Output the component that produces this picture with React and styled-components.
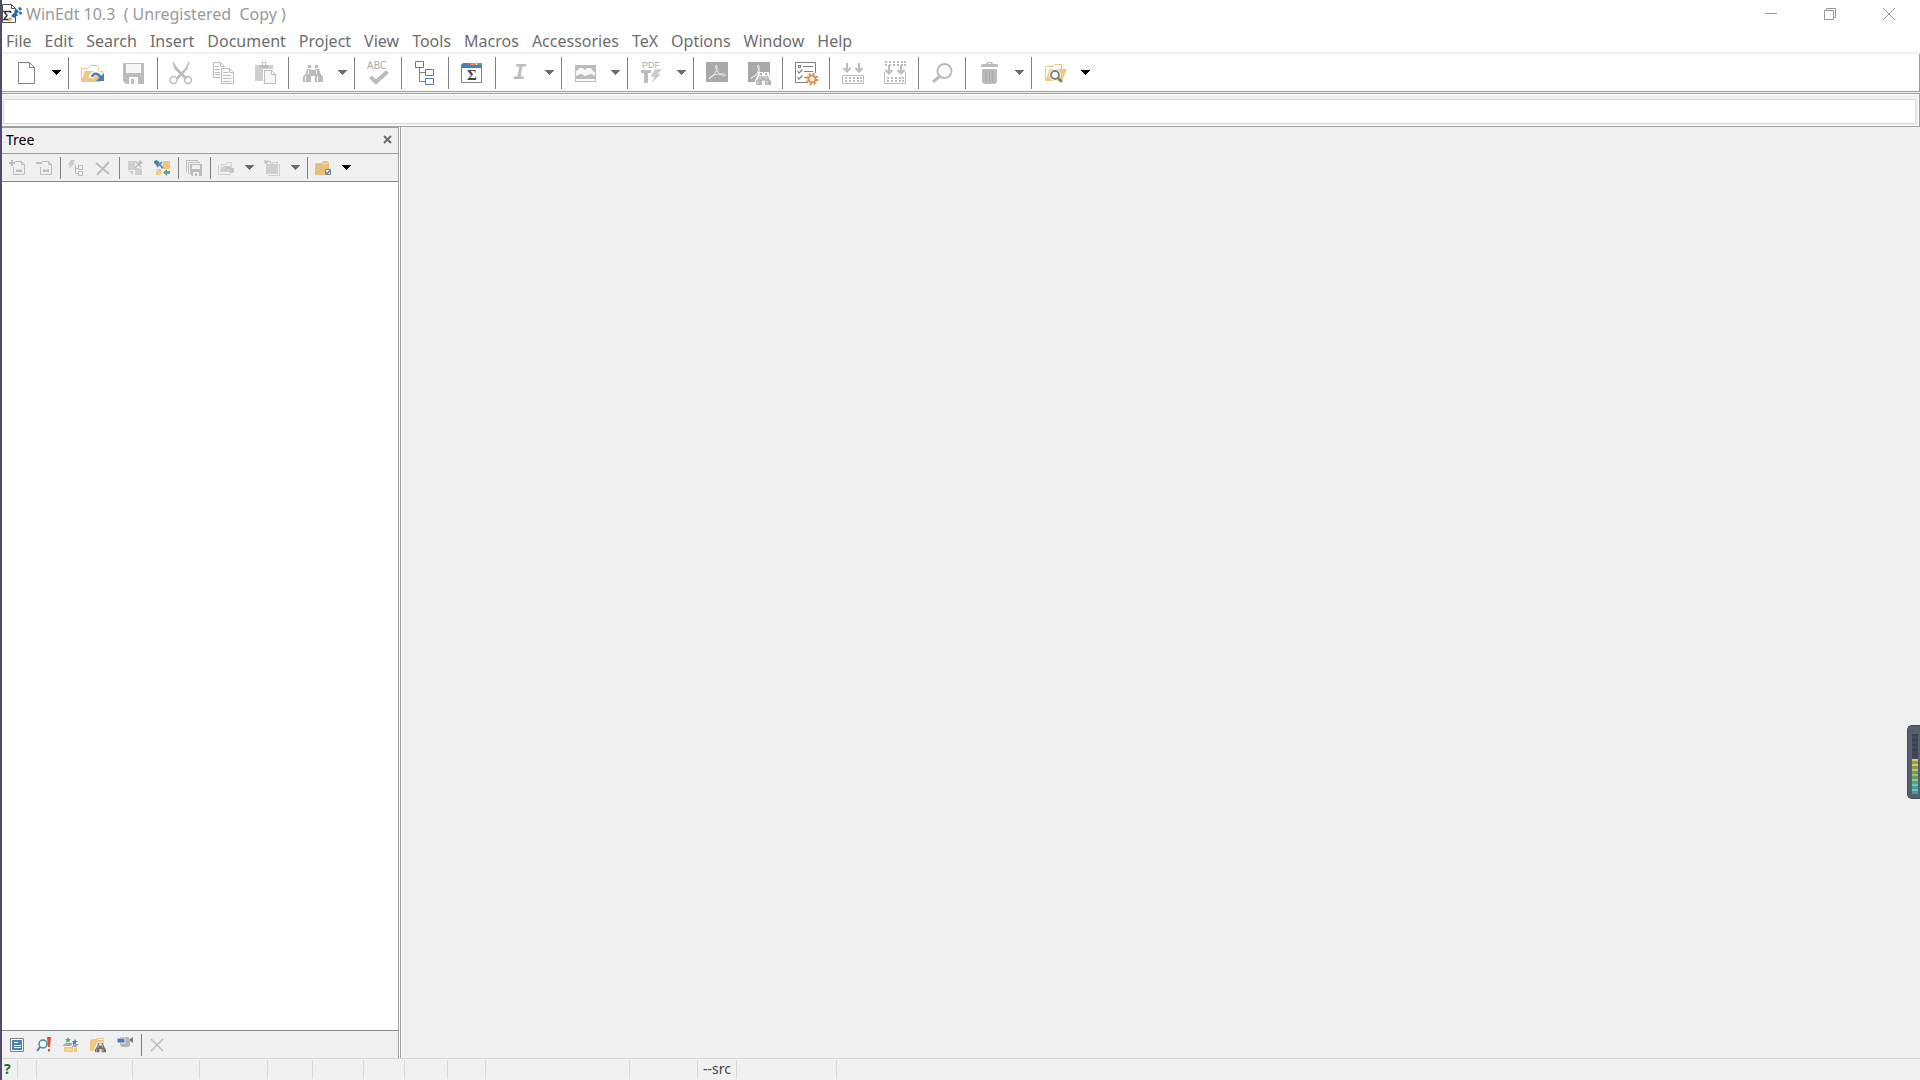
import React from 'react'
import styled, { createGlobalStyle, ThemeProvider } from 'styled-components'

const theme = {
    face: '#f0f0f0',
    line: '#a0a0a0',
    soft: '#d9d9d9',
    ink: '#6d6d6d',
}

const Global = createGlobalStyle`
*, *::before, *::after { box-sizing: border-box; }
body {
  margin: 0;
  background: #f0f0f0;
  font-family: "Noto Sans", "Open Sans", sans-serif;
}
button {
  padding: 0;
  border: 0;
  background: none;
  font: inherit;
  color: inherit;
}
svg { overflow: visible; }
`

const Frame = styled.div`
display: flex;
flex-direction: column;
height: 100vh;
overflow: hidden;
background: ${props => props.theme.face};
border-left: 2px solid #4f4c6b;
`

// title bar
const TitleBar = styled.header`
display: flex;
align-items: center;
height: 28px;
flex: none;
padding-right: 2px;
background: #fff;
color: #999;
`
const Title = styled.h1`
flex: 1;
margin: 0;
padding-left: 4px;
font-size: 16px;
font-weight: 400;
line-height: 28px;
white-space: pre;
`
const WindowButton = styled.button`
display: grid;
place-items: center;
width: 59px;
height: 28px;
`

// menu
const Menu = styled.nav`
display: flex;
flex: none;
height: 26px;
background: #fff;
border-bottom: 2px solid ${props => props.theme.face};
`
const MenuItem = styled.button`
padding: 0 6px 0 7px;
font-size: 16px;
line-height: 26px;
color: ${props => props.theme.ink};
&:first-child { padding-left: 4px; }
`

// toolbars
const MainBar = styled.div`
display: flex;
align-items: center;
flex: none;
height: 38px;
padding-left: 1px;
background: #fff;
border-right: 1px solid ${props => props.theme.line};
border-bottom: 1px solid ${props => props.theme.line};
`
const SmallBar = styled.div`
display: flex;
align-items: center;
flex: none;
height: 27px;
`
const Group = styled.div`
display: flex;
align-items: center;
height: ${props => (props.$small ? 22 : 32)}px;
padding: 0 2px;
border-right: 1px solid #808080;
&:last-child { border-right: 0; }
`
const Tool = styled.button`
display: grid;
align-items: center;
justify-items: start;
width: ${props => (props.$small ? 27 : 42)}px;
height: 100%;
padding-left: ${props => (props.$small ? 5 : 9)}px;
`
const Drop = styled.button`
display: grid;
place-items: center;
width: 19px;
height: 100%;
color: ${props => (props.$on ? '#000' : props.theme.ink)};
`

// command line strip
const Strip = styled.div`
display: flex;
flex: none;
height: 34px;
margin-top: 1px;
padding: 5px 3px 2px 0;
border: 1px solid ${props => props.theme.line};
border-left: 0;
box-shadow: inset 0 1px #fff, inset 0 -1px #fff, inset -1px 0 #fff;
`
const Command = styled.input`
flex: 1;
min-width: 0;
height: 25px;
margin-left: 1px;
padding: 0 4px;
border: 1px solid ${props => props.theme.soft};
outline: 0;
background: #fff;
font: 15px "Noto Sans", sans-serif;
`

const Body = styled.main`
display: flex;
flex: 1;
min-height: 0;
`
const Side = styled.aside`
display: flex;
flex-direction: column;
flex: none;
width: 397px;
margin-right: 3px;
border-top: 1px solid ${props => props.theme.line};
border-right: 1px solid ${props => props.theme.line};
box-shadow: 1px 0 #fff, 2px 0 ${props => props.theme.line}, 3px 0 #fff;
`
const SideHead = styled.div`
display: flex;
align-items: center;
justify-content: space-between;
flex: none;
height: 26px;
padding: 0 5px 2px 4px;
border-bottom: 1px solid ${props => props.theme.line};
`
const SideTitle = styled.h2`
margin: 0;
font-size: 14px;
font-weight: 400;
line-height: 22px;
color: #000;
`
const Close = styled.button`
display: grid;
place-items: center;
width: 12px;
height: 20px;
`
const TreeView = styled.div`
flex: 1;
min-height: 0;
background: #fff;
border-top: 1px solid #828790;
border-bottom: 1px solid #828790;
`
const Desk = styled.section`
flex: 1;
`

// status bar
const Status = styled.footer`
display: flex;
flex: none;
height: 22px;
padding: 1px 0;
border-top: 1px solid ${props => props.theme.soft};
`
const Cell = styled.div`
width: ${props => props.$w}px;
flex: none;
padding-left: ${props => (props.$w < 20 ? 2 : 5)}px;
border-right: 1px solid ${props => props.theme.soft};
font-size: 14px;
font-weight: ${props => (props.$bold ? 700 : 400)};
line-height: 18px;
color: ${props => (props.$bold ? '#0a7a2a' : '#444')};
white-space: nowrap;
`

// floating volume meter on the screen edge
const Meter = styled.div`
position: fixed;
right: 0;
top: 725px;
display: flex;
flex-direction: column;
align-items: flex-end;
width: 13px;
height: 74px;
padding: 8px 2px 0 0;
border: 1px solid #454c5a;
border-right: 0;
border-radius: 5px 0 0 5px;
background: #565f70;
`
const Tick = styled.i`
width: 6px;
height: 5px;
background: linear-gradient(${props => props.$c} 2px, color-mix(in srgb, ${props => props.$c} 55%, #4a5160) 2px);
`

const G = '#bcbcbc'
const K = '#808080'
const B = '#4a80b8'
const O = '#efc77e'
const N = '#5aa58c'

const Big = ({ children }) => (
    <svg width="24" height="24" viewBox="0 0 24 24" fill="none" aria-hidden="true">{children}</svg>
)
const Small = ({ children }) => (
    <svg width="16" height="16" viewBox="0 0 16 16" fill="none" aria-hidden="true">{children}</svg>
)
const Arrow = () => (
    <svg width="9" height="5" viewBox="0 0 9 5" shapeRendering="crispEdges" aria-hidden="true">
        <path d="M0 0H9V1H8V2H7V3H6V4H5V5H4V4H3V3H2V2H1V1H0z" fill="currentColor" />
    </svg>
)

// 20x17 binoculars
const Glasses = ({ fill = G, halo }) => (
    <g>
        {halo && <path d="M4 0H8V3H12V0H16V3L20 11V17H12V11H8V17H0V11L4 3z" fill={halo} stroke={halo} strokeWidth="3" />}
        <path d="M5 0H8V3H5zM12 0H15V3H12zM4 4H8V10H2zM12 4H16L18 10H12zM8 5H12V11H8zM1 10H8V17H0V12zM12 10H19L20 12V17H12z" fill={fill} />
        <path d="M2.500 11V16M14.500 11V16M5.500 5V9M13.500 5V9" stroke={halo || '#fff'} />
    </g>
)

const Logo = () => (
    <svg width="20" height="20" viewBox="0 0 20 20" fill="none" aria-hidden="true">
        <path d="M.5 .5H9.500L13.500 4.500V18.500H.5z" fill="#fff" stroke="#555" />
        <path d="M9.500 .5V4.500H13.500" stroke="#555" />
        <path d="M8.500 9V7.500H2L5 11.500L2 15.500H8.500V14" stroke="#333" strokeWidth="1.500" />
        <path d="M5 17L8 13L10 16z" fill="#efa13c" />
        <path d="M9 12L13 8L16 11L12 14z" fill="#1d69b0" />
        <path d="M12 7L15 5L17 8L14 10zM16 4L18 3L20 5L18 7z" fill="#1d69b0" />
        <circle cx="18.500" cy="9" r="1.500" fill="#1d69b0" />
    </svg>
)

const NewDoc = () => (
    <Big><path d="M4.500 1.500H15.500L20.500 6.500V22.500H4.500zM15.500 1.500V6.500H20.500" fill="#fff" stroke={K} /></Big>
)
const Open = () => (
    <Big>
        <path d="M1.500 20V7.500H8L10 4.500H17.500L18.500 7.500V10" stroke={O} />
        <path d="M1 21L5 10H23L20 21z" fill={O} />
        <path d="M11 17C12 11 20 10 22 17" stroke="#fff" strokeWidth="5" />
        <path d="M12 16C13 12 18 11 21 17" stroke={B} strokeWidth="2.500" />
        <path d="M24 12V20H16z" fill={B} />
    </Big>
)
const Save = () => (
    <Big>
        <path d="M1 2H22V23H4L1 20z" fill={G} />
        <path d="M4 3H19V12H4zM7 16H16V23H7z" fill="#f7f7f7" />
        <path d="M9 18H12V23H9z" fill={G} />
    </Big>
)
const Cut = () => (
    <Big>
        <path d="M4 1L8 7L18 17L16 18L6 8z" fill={G} stroke={G} />
        <path d="M20 1L17 7L7 17L9 18L18 8z" fill={G} stroke={G} />
        <circle cx="4.500" cy="19" r="3.500" stroke={G} strokeWidth="1.500" />
        <circle cx="19" cy="19" r="3.500" stroke={G} strokeWidth="1.500" />
    </Big>
)
const Copy = () => (
    <Big>
        <path d="M2.500 1.500H9.500L13.500 5.500V16.500H2.500zM9.500 1.500V5.500H13.500" fill="#fafafa" stroke={G} />
        <path d="M4 5.500H8M4 8.500H11M4 11.500H10M4 13.500H10" stroke={G} />
        <path d="M10.500 7.500H18.500L22.500 11.500V22.500H10.500z" fill="#fafafa" stroke="#fff" strokeWidth="3" />
        <path d="M10.500 7.500H18.500L22.500 11.500V22.500H10.500zM18.500 7.500V11.500H22.500" fill="#fafafa" stroke={G} />
        <path d="M12 11.500H17M12 14.500H20M12 17.500H20M12 20.500H20" stroke={G} />
    </Big>
)
const Paste = () => (
    <Big>
        <path d="M2 4H20V20H2z" fill="#cfcfcf" />
        <path d="M7 4H9V1H13V4H15V7H7z" fill={G} />
        <path d="M10 2H12V4H10z" fill="#fff" />
        <path d="M11.500 9.500H18.500L22.500 13.500V22.500H11.500z" stroke="#fff" strokeWidth="3" />
        <path d="M11.500 9.500H18.500L22.500 13.500V22.500H11.500zM18.500 9.500V13.500H22.500" fill="#f7f7f7" stroke={G} />
    </Big>
)
const Find = () => <Big><g transform="translate(3 4)"><Glasses /></g></Big>
const Spell = () => (
    <Big>
        <text x="1" y="8" fontSize="10" fontFamily="Noto Sans, sans-serif" fill="#a8a8a8">ABC</text>
        <path d="M4.500 16L10 21L21.500 10.500" stroke={G} strokeWidth="4" />
    </Big>
)
const TreeIcon = () => (
    <Big>
        <path d="M6.500 7V20.500H12M7 11.500H12" stroke={K} />
        <path d="M2.500.5H10.500V6.500H2.500zM12.500 8.500H20.500V14.500H12.500zM12.500 17.500H20.500V23.500H12.500z" fill="#fff" stroke={B} />
    </Big>
)
const Sigma = () => (
    <Big>
        <path d="M1.500 5.500H21.500V21.500H1.500z" fill="#fff" stroke={K} />
        <path d="M1 4L3 2H10V4H22V7H1z" fill={B} />
        <path d="M10 2H16V4H10z" fill="#e58c3e" />
        <path d="M17 2H22V4H17z" fill={N} />
        <text x="7" y="19" fontSize="15" fontWeight="700" fontFamily="Liberation Serif, serif" fill="#444">Σ</text>
    </Big>
)
const Italic = () => (
    <Big><text x="6" y="18" fontSize="22" fontWeight="700" fontStyle="italic" fontFamily="Liberation Mono, monospace" fill={G}>I</text></Big>
)
const Picture = () => (
    <Big>
        <path d="M2 4H23V21H2z" fill={G} />
        <path d="M3 15V10L5 9L6 7H10L12 9L14 7H18L20 10L22 11V15L18 13L12 15L8 13zM3 18H22V20H3z" fill="#f7f7f7" />
    </Big>
)
const PdfTex = () => (
    <Big>
        <text x="3" y="7" fontSize="9" fontFamily="Liberation Sans, sans-serif" fill="#a8a8a8">PDF</text>
        <path d="M2 9H12V12H9V22H5V12H2z" fill={G} />
        <path d="M16 8H23L19 13H22L12 23L15 16H11z" fill="#cacaca" stroke="#fff" strokeWidth=".5" />
    </Big>
)
const Swoosh = () => (
    <path d="M4 17C9 15 13 9 12 5C11 3 10 4 11 7C12 11 16 15 20 15C22 14 19 12 15 13C10 13 7 15 4 18" stroke="#eee" />
)
const Pdf = () => <Big><path d="M1 1H23V21H1z" fill="#a9a9a9" /><Swoosh /></Big>
const PdfFind = () => (
    <Big>
        <path d="M1 1H23V21H1z" fill="#a9a9a9" />
        <Swoosh />
        <g transform="translate(9 12) scale(.75 .7)"><Glasses halo="#fff" fill="#b4b4b4" /></g>
    </Big>
)
const Checklist = () => (
    <Big>
        <path d="M13 21.500H1.500V1.500H21.500V12" stroke={K} />
        <path d="M4.500 4.500H6.500V6.500H4.500zM9 5.500H19M3.500 10L5 12L8.500 8.500M10 10.500H19M3.500 16L5 18L8.500 14.500M10 16.500H12" stroke={K} strokeWidth="1.200" />
        <circle cx="18" cy="18" r="3.500" stroke="#e58c3e" strokeWidth="2" fill="#fff" />
        <circle cx="18" cy="18" r="5.300" stroke="#e58c3e" strokeWidth="2" strokeDasharray="2.100 2.060" />
    </Big>
)
const dots = (ys, xs = [4, 8, 12, 16, 19]) => ys.map(y => xs.map(x => (
    <path key={x + '-' + y} d={`M${x} ${y}h2v2h-2z`} fill={G} />
)))
const DownPair = ({ y }) => (
    <path d={`M6 ${y}V${y + 8}M2.500 ${y + 5}L6 ${y + 8.500}L9.500 ${y + 5}M18 ${y}V${y + 8}M14.500 ${y + 5}L18 ${y + 8.500}L21.500 ${y + 5}`} stroke={G} strokeWidth="2" />
)
const KeysDown = () => (
    <Big><DownPair y={2} /><path d="M1.500 14.500H22.500V22.500H1.500z" stroke={G} />{dots([16, 19])}</Big>
)
const DotsDown = () => (
    <Big>
        <path d="M1.500 11V22.500H22.500V11" stroke={G} />
        {dots([0, 3], [2, 6, 10, 14, 18, 21])}
        <DownPair y={4} />
        {dots([16, 19])}
    </Big>
)
const Magnifier = () => (
    <Big>
        <circle cx="14.500" cy="10" r="7" fill="#fafafa" stroke={G} strokeWidth="2" />
        <path d="M10 15L3 21" stroke={G} strokeWidth="3" />
    </Big>
)
const Trash = () => (
    <Big>
        <path d="M4 6V4L6 3H9L10 1H15L16 3H19L21 4V6zM11 3H14V2H11zM5 8H20V21L18 23H7L5 21z" fill={G} fillRule="evenodd" />
        <path d="M9 10V21M12.500 10V21M16 10V21" stroke="#a4a4a4" />
    </Big>
)
const FolderSearch = () => (
    <Big>
        <path d="M2.500 19V5.500H10L12 3.500H18.500V8" stroke={O} />
        <path d="M2 20L7 8H24L19 20z" fill={O} />
        <circle cx="12" cy="14" r="4" fill="#fff" stroke="#fff" strokeWidth="4" />
        <path d="M15 17L19 21" stroke={K} strokeWidth="2.500" />
        <circle cx="12" cy="14" r="4" fill="#fff" stroke={K} strokeWidth="2" />
    </Big>
)

const PageBox = () => (
    <g>
        <path d="M6 1.500H12.500L15.500 4.500V14.500H4.500V7" stroke={G} />
        <path d="M12.500 1.500V4.500H15.500" stroke={G} />
        <path d="M7 9.500H13V12H7z" fill={G} />
    </g>
)
const AddPage = () => <Small><PageBox /><path d="M0 3H6M3 0V6" stroke={G} strokeWidth="2" /></Small>
const RemovePage = () => <Small><PageBox /><path d="M0 3H6" stroke={G} strokeWidth="2" /></Small>
const BoltTree = () => (
    <Small>
        <path d="M3 0H7L5 3H7L1 9L2 5H0z" fill="#cacaca" />
        <path d="M7.500 5V13.500H10M8 8.500H10M10.500 5.500H14.500V9.500H10.500zM10.500 11.500H14.500V15.500H10.500z" stroke={G} />
    </Small>
)
const Cross = () => <Small><path d="M1 3L14 14M14 2L2 15" stroke={G} strokeWidth="2" /></Small>
const NoteOff = () => (
    <Small>
        <path d="M1 1H9L8 4V8H12L15 9V15H8V10H1z" fill="#cfcfcf" />
        <path d="M1 11H6V15z" fill="#cfcfcf" />
        <path d="M8 8L11 5M9 2L14 7" stroke={G} strokeWidth="1.500" />
        <path d="M11 3L13 0L16 3L13 5z" fill={G} />
    </Small>
)
const NoteOn = () => (
    <Small>
        <path d="M9 1H16V9H7V7L9 6zM2 9H7V15z" fill={O} />
        <path d="M2 10L7 15H2z" fill={O} />
        <path d="M5 4L9 8M3 7L8 2" stroke={B} strokeWidth="1.500" />
        <path d="M0 1L3 0L6 3L3 6L0 3z" fill={B} />
        <path d="M13 9L9 12.500L13 16V14H16V11H13z" fill={N} />
    </Small>
)
const SaveAll = () => (
    <Small>
        <path d="M.5 12V.5H12M2.500 14V2.500H14" stroke={G} />
        <path d="M4 4H16V16H6L4 14z" fill={G} />
        <path d="M6 5H14V9H6zM7 12H13V16H7z" fill="#f0f0f0" />
        <path d="M9 13H11V16H9z" fill={G} />
    </Small>
)
const OpenOff = () => (
    <Small>
        <path d="M.5 5V14.500H13" stroke="#cfcfcf" />
        <path d="M3 12V4.500H8L9 2.500H13.500V6" stroke="#cfcfcf" />
        <path d="M2 12L5 6H14L12 12z" fill="#cfcfcf" />
        <path d="M8 10C9 6 13 7 14 11M15 8V12H11" stroke={G} strokeWidth="1.500" />
    </Small>
)
const FolderOff = () => (
    <Small>
        <path d="M2 4H7L9 2H14V14H2z" fill="#cfcfcf" />
        <path d="M15.500 4V15.500H4" stroke="#cfcfcf" />
        <path d="M1 0V3H4M1 3C3 0 6 1 7 3" stroke={G} strokeWidth="1.200" />
        <path d="M9 3.500H13" stroke="#f0f0f0" />
    </Small>
)
const FolderCheck = () => (
    <Small>
        <path d="M0 4L1 3H7L8 1H13L14 3V15H0z" fill="#e8c07c" />
        <path d="M8 3.500H13" stroke="#f7e3bd" />
        <path d="M10.500 9.500H15.500V14.500H10.500z" fill="#fff" stroke={K} />
        <path d="M11 12L12.500 13.500L15 10.500" stroke={B} strokeWidth="1.500" />
    </Small>
)
const ListBox = () => (
    <Small>
        <path d="M1.500 1.500H14.500V14.500H1.500z" fill="#fff" stroke={K} />
        <path d="M3 3H13V13H3z" fill={B} />
        <path d="M5 5.500H9M5 8.500H12M5 10.500H12" stroke="#fff" />
    </Small>
)
const SearchAlert = () => (
    <Small>
        <circle cx="7" cy="7" r="4" fill="#fff" stroke={B} strokeWidth="1.500" />
        <path d="M4 10L1 14" stroke={B} strokeWidth="2" />
        <path d="M11 0H15L14 10H12zM12 12H14V14.500H12z" fill="#d9532c" />
    </Small>
)
const StarBox = () => (
    <Small>
        <path d="M5 0L6 2H8L6.500 3.500L7 6L5 4.500L3 6L3.500 3.500L2 2H4z" fill={N} />
        <path d="M12 2L13 4H15L13 5.500V8L12 6.500L10 8V5.500L9 4H11z" fill={B} />
        <path d="M0 8L3 6H10L8 9H0zM9 9L11 7H16L13 10H9z" fill="#a8a8a8" />
        <path d="M1 10H10V15H1zM11 10.500L14 10V15H11z" fill={O} />
        <path d="M3 12.500H8" stroke="#fff" />
    </Small>
)
const FolderFind = () => (
    <Small>
        <path d="M0 4L2 2H6L8 1H13L14 3V14H0z" fill={O} />
        <path d="M8 2.500H13" stroke="#fff" />
        <g transform="translate(5 6) scale(.55)"><Glasses halo="#f0f0f0" fill="#6d6d6d" /></g>
    </Small>
)
const Camera = () => (
    <Small>
        <path d="M3 0H11L13 2V9L11 10H5L3 8z" fill="#b4b4b4" />
        <path d="M0 1H8V6H0z" fill={B} stroke="#f0f0f0" />
        <path d="M16 0V6L13 4V2z" fill={K} />
    </Small>
)
const ThinCross = () => <Small><path d="M2 2L14 14M14 2L2 14" stroke={G} strokeWidth="1.500" /></Small>

// null is a greyed drop-down arrow, 'on' an enabled one
const mainTools = [
    [['New', NewDoc], 'on'],
    [['Open', Open], ['Save', Save]],
    [['Cut', Cut], ['Copy', Copy], ['Paste', Paste]],
    [['Find', Find], null],
    [['Spell check', Spell]],
    [['Tree', TreeIcon]],
    [['Symbols', Sigma]],
    [['Italic', Italic], null],
    [['Picture', Picture], null],
    [['PDFTeX', PdfTex], null],
    [['View PDF', Pdf], ['Search PDF', PdfFind]],
    [['Execution modes', Checklist]],
    [['Compile', KeysDown], ['Compile selection', DotsDown]],
    [['Zoom', Magnifier]],
    [['Erase', Trash], null],
    [['Explore', FolderSearch], 'on'],
]
const treeTools = [
    [['Add', AddPage], ['Remove', RemovePage]],
    [['Rebuild tree', BoltTree], ['Delete', Cross]],
    [['Unpin', NoteOff], ['Pin', NoteOn]],
    [['Save all', SaveAll]],
    [['Open project', OpenOff], null, ['Reload', FolderOff], null],
    [['Folder options', FolderCheck], 'on'],
]
const footTools = [
    [['List', ListBox], ['Search errors', SearchAlert], ['Favourites', StarBox], ['Find in folder', FolderFind], ['Record', Camera]],
    [['Close list', ThinCross]],
]

const menu = ['File', 'Edit', 'Search', 'Insert', 'Document', 'Project', 'View', 'Tools', 'Macros', 'Accessories', 'TeX', 'Options', 'Window', 'Help']

const cells = [[16, '?'], [19], [96], [67], [68], [45], [51], [41], [43], [38], [144], [68], [39, '--src'], [100]]

const ticks = ['#3a4150', '#3a4150', '#3a4150', '#3a4150', '#3a4150', '#d4cf4e', '#c8d052', '#a9cf6a', '#86cc68', '#78cf90', '#5ed0ae', '#4fd3bd']

const Groups = ({ groups, small }) => groups.map((group, i) => (
    <Group key={i} $small={small}>
        {group.map((item, j) => {
            if (!Array.isArray(item)) {
                return <Drop key={j} $on={item === 'on'} aria-label="More"><Arrow /></Drop>
            }
            const [label, Icon] = item
            return <Tool key={j} $small={small} aria-label={label}><Icon /></Tool>
        })}
    </Group>
))

const App = () => {
    return (
        <ThemeProvider theme={theme}>
            <Global />
            <Frame>
                <TitleBar>
                    <Logo />
                    <Title>{'WinEdt 10.3  ( Unregistered  Copy )'}</Title>
                    <WindowButton aria-label="Minimize">
                        <svg width="12" height="12" viewBox="0 0 12 12"><path d="M0 5.500H12" stroke="#999" /></svg>
                    </WindowButton>
                    <WindowButton aria-label="Restore">
                        <svg width="12" height="12" viewBox="0 0 12 12" fill="none"><path d="M.5 2.500H9.500V11.500H.5zM2.500 2.500V.5H11.500V9.500H9.500" stroke="#999" /></svg>
                    </WindowButton>
                    <WindowButton aria-label="Close">
                        <svg width="12" height="12" viewBox="0 0 12 12"><path d="M0 0L12 12M12 0L0 12" stroke="#999" /></svg>
                    </WindowButton>
                </TitleBar>
                <Menu>
                    {menu.map(name => <MenuItem key={name}>{name}</MenuItem>)}
                </Menu>
                <MainBar><Groups groups={mainTools} /></MainBar>
                <Strip><Command aria-label="Command" /></Strip>
                <Body>
                    <Side>
                        <SideHead>
                            <SideTitle>Tree</SideTitle>
                            <Close aria-label="Close tree">
                                <svg width="9" height="7" viewBox="0 0 9 7"><path d="M1 0L8 7M8 0L1 7" stroke="#6d6d6d" strokeWidth="2" /></svg>
                            </Close>
                        </SideHead>
                        <SmallBar><Groups groups={treeTools} small /></SmallBar>
                        <TreeView />
                        <SmallBar><Groups groups={footTools} small /></SmallBar>
                    </Side>
                    <Desk />
                </Body>
                <Status>
                    {cells.map(([w, text], i) => <Cell key={i} $w={w} $bold={text === '?'}>{text}</Cell>)}
                </Status>
            </Frame>
            <Meter>
                {ticks.map((c, i) => <Tick key={i} $c={c} />)}
            </Meter>
        </ThemeProvider>
    )
}

export default App
